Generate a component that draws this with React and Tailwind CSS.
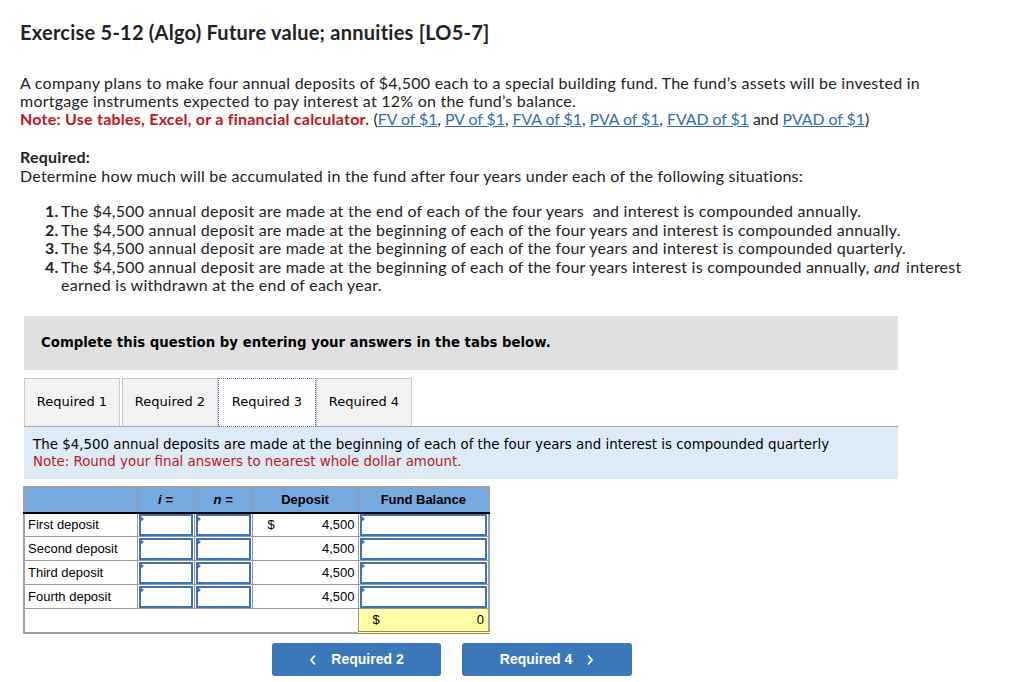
import React from 'react'

const ROWS = ['First deposit', 'Second deposit', 'Third deposit', 'Fourth deposit']
const TABS = ['Required 1', 'Required 2', 'Required 3', 'Required 4']

// editable cell: blue outline + tiny marker triangle in the corner
function InputCell({ w }) {
  return (
    <td className={`relative p-0 h-[24px] ${w} border-l border-[#999]`}>
      <div className="h-[22px] mx-[1px] border-2 border-[#3d72b4] bg-white">
        <span className="absolute left-[1px] top-[1px] w-0 h-0 border-t-[4px] border-b-[4px] border-l-[5px] border-t-transparent border-b-transparent border-l-[#3d72b4]" />
      </div>
    </td>
  )
}

export default function App() {
  return (
    <div className="w-[1024px] h-[682px] bg-white text-[#222] overflow-hidden font-['Lato','Liberation_Sans',sans-serif]">
      <div className="pl-[20px] pr-[50px] pt-[20px] tracking-[0.015em]">
        {/* ── Title ── */}
        <h1 className="text-[20px] font-bold leading-[24px] text-[#222]">
          Exercise 5-12 (Algo) Future value; annuities [LO5-7]
        </h1>

        {/* ── Problem text ── */}
        <div className="mt-[30px] text-[16px] leading-[18px]">
          <p>
            A company plans to make four annual deposits of $4,500 each to a special building fund. The fund’s assets will be invested in
            mortgage instruments expected to pay interest at 12% on the fund’s balance.
          </p>
          <p>
            <span className="font-bold text-[#c0161b]">Note: Use tables, Excel, or a financial calculator.</span>{' '}
            <span className="text-[15.8px] tracking-normal">
              (<a className="text-[#2c6db5] underline">FV of $1</a>, <a className="text-[#2c6db5] underline">PV of $1</a>,{' '}
              <a className="text-[#2c6db5] underline">FVA of $1</a>, <a className="text-[#2c6db5] underline">PVA of $1</a>,{' '}
              <a className="text-[#2c6db5] underline">FVAD of $1</a> and <a className="text-[#2c6db5] underline">PVAD of $1</a>)
            </span>
          </p>
        </div>

        <div className="mt-[19px] text-[16px] leading-[19px]">
          <div className="font-bold">Required:</div>
          <div>Determine how much will be accumulated in the fund after four years under each of the following situations:</div>
        </div>

        <ol className="mt-[17px] ml-[25px] text-[16px] leading-[18.5px]">
          <li className="flex"><b className="w-[16px] shrink-0">1.</b><span>The $4,500 annual deposit are made at the end of each of the four years&nbsp; and interest is compounded annually.</span></li>
          <li className="flex"><b className="w-[16px] shrink-0">2.</b><span>The $4,500 annual deposit are made at the beginning of each of the four years and interest is compounded annually.</span></li>
          <li className="flex"><b className="w-[16px] shrink-0">3.</b><span>The $4,500 annual deposit are made at the beginning of each of the four years and interest is compounded quarterly.</span></li>
          <li className="flex"><b className="w-[16px] shrink-0">4.</b><span>The $4,500 annual deposit are made at the beginning of each of the four years interest is compounded annually, <i className="pr-[2px]">and</i> interest earned is withdrawn at the end of each year.</span></li>
        </ol>
      </div>

      {/* ── Tabs block ── */}
      <div className="ml-[24px] w-[874px] mt-[21px] font-['DejaVu_Sans','Verdana',sans-serif] text-[13px]">
        <div className="bg-[#e0e0e0] h-[54px] flex items-center px-[17px] font-bold text-black text-[13.3px]">
          Complete this question by entering your answers in the tabs below.
        </div>

        <div className="mt-[8px] flex items-end h-[49px] border-b border-[#a8a8a8]">
          {TABS.map((t, i) =>
            i === 2 ? (
              <div key={t} className="h-[49px] w-[98px] -mb-px bg-white border border-dotted border-[#2f6fb7] flex items-center justify-center text-black">
                {t}
              </div>
            ) : (
              <div key={t} className={`h-[48px] w-[96px] bg-[#f2f2f2] border border-b-0 border-[#c8c8c8] flex items-center justify-center text-black ${i === 1 ? 'ml-[2px]' : ''}`}>
                {t}
              </div>
            )
          )}
        </div>

        <div className="bg-[#ddebf7] h-[52px] pl-[9px] pt-[9px] leading-[17px] text-[13.4px]">
          <div className="text-black">The $4,500 annual deposits are made at the beginning of each of the four years and interest is compounded quarterly</div>
          <div className="text-[#c0161b]">Note: Round your final answers to nearest whole dollar amount.</div>
        </div>
      </div>

      {/* ── Answer table ── */}
      <div className="ml-[23px] mt-[7px] font-['Liberation_Sans','Arial',sans-serif] text-[13px] text-black">
        <table className="border-collapse border-2 border-[#a0a0a0] table-fixed">
          <thead>
            <tr className="bg-[#76a9dd] h-[26px] border-b-2 border-black font-bold">
              <th className="w-[113px]"></th>
              <th className="w-[57px] border-l border-[#999] italic">i =</th>
              <th className="w-[58px] border-l border-[#999] italic">n =</th>
              <th className="w-[106px] border-l border-[#999]">Deposit</th>
              <th className="w-[131px] border-l border-[#999]">Fund Balance</th>
            </tr>
          </thead>
          <tbody>
            {ROWS.map((r, i) => (
              <tr key={r} className="h-[24px] border-b border-[#999]">
                <td className="pl-[3px] text-left">{r}</td>
                <InputCell w="w-[57px]" />
                <InputCell w="w-[58px]" />
                <td className="border-l border-[#999] px-[3px]">
                  <div className="flex justify-between pl-[12px]">
                    <span>{i === 0 ? '$' : ''}</span>
                    <span>4,500</span>
                  </div>
                </td>
                <InputCell w="w-[131px]" />
              </tr>
            ))}
            <tr className="h-[24px]">
              <td colSpan={4}></td>
              <td className="bg-[#ffffa6] border-l border-[#999] border-b-[3px] border-b-[#8a8a5a] border-double px-[4px]">
                <div className="flex justify-between pl-[10px]">
                  <span>$</span>
                  <span>0</span>
                </div>
              </td>
            </tr>
          </tbody>
        </table>
      </div>

      {/* ── Navigation buttons ── */}
      <div className="mt-[9px] ml-[272px] flex gap-[21px] font-['Liberation_Sans','Arial',sans-serif]">
        <button className="w-[169px] h-[33px] rounded-[3px] bg-[#3a78ba] text-white font-bold text-[14px] flex items-center justify-center gap-[14px]">
          <svg width="8" height="12" viewBox="0 0 8 12" fill="none" stroke="white" strokeWidth="1.8"><path d="M6 1.5 L2 6 L6 10.5" /></svg>
          Required 2
        </button>
        <button className="w-[170px] h-[33px] rounded-[3px] bg-[#3a78ba] text-white font-bold text-[14px] flex items-center justify-center gap-[14px]">
          Required 4
          <svg width="8" height="12" viewBox="0 0 8 12" fill="none" stroke="white" strokeWidth="1.8"><path d="M2 1.5 L6 6 L2 10.5" /></svg>
        </button>
      </div>
    </div>
  )
}
